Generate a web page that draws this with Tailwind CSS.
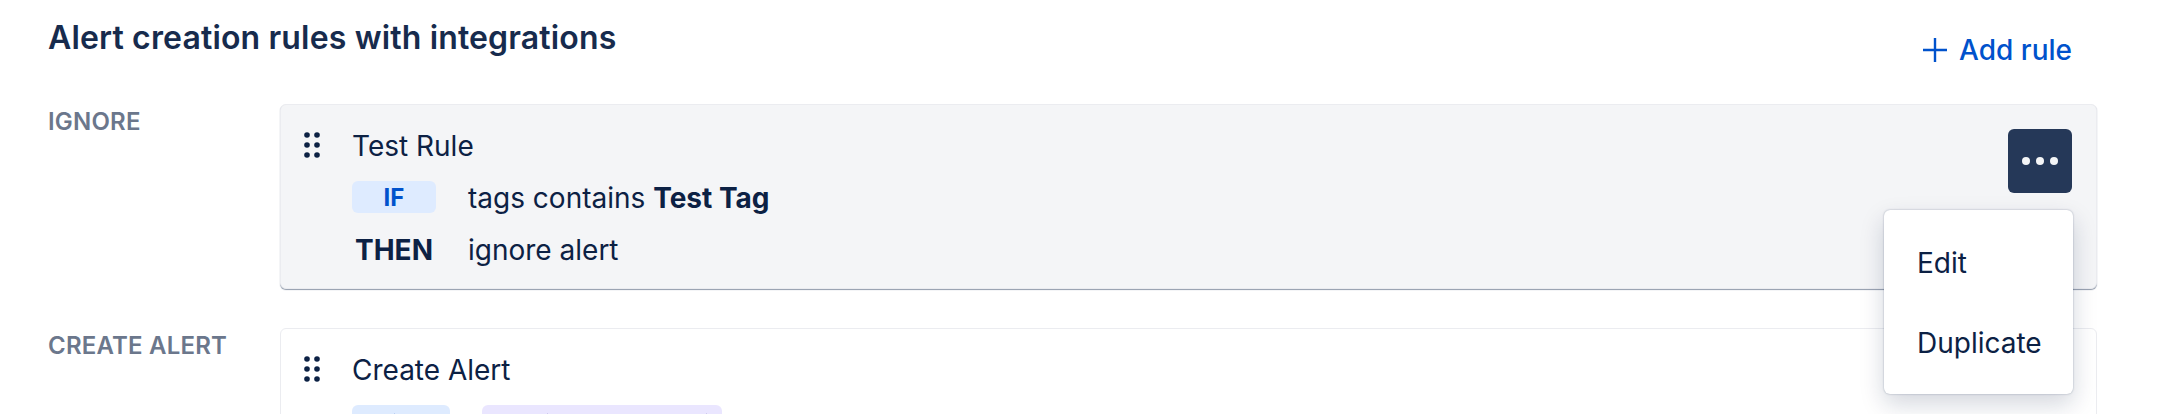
<!doctype html>
<html>
<head>
<meta charset="utf-8">
<script src="https://cdn.jsdelivr.net/npm/@tailwindcss/browser@4"></script>
</head>
<body class="bg-white">
<div class="relative h-[414px] w-[2160px] overflow-hidden bg-white font-['Inter',sans-serif] text-[#0c2144] px-[48px]">
  <div class="flex items-start justify-between pr-[40px] h-[104px]">
    <h2 class="pt-[18px] text-[32px] leading-[40px] font-semibold tracking-[0.15px] text-[#172b4d]">Alert creation rules with integrations</h2>
    <button class="mt-[30px] flex items-center gap-[12px] text-[#0052cc] text-[28px] leading-[40px] font-medium">
      <svg class="w-[24px] h-[24px]" viewBox="0 0 24 24" fill="none" stroke="#0052cc" stroke-width="2.4"><path d="M12 0v24M0 12h24"/></svg>
      Add rule
    </button>
  </div>
  <div class="flex flex-col gap-[39px]">
    <div class="flex">
      <div class="w-[232px] shrink-0 pt-[4px] text-[24px] leading-[28px] font-semibold tracking-[0.2px] text-[#6b778c]">IGNORE</div>
      <div class="w-[1817px] h-[185px] rounded-[6px] bg-[#f4f5f7] border border-[#ebecf0] shadow-[0_1px_1px_rgba(9,30,66,0.45)] flex pl-[23px] pr-[24px] pt-[17px]">
        <svg class="w-[16px] h-[26px] mt-[10px] mr-[32px] shrink-0" viewBox="0 0 16 26" fill="#0c2144"><circle cx="3" cy="3" r="2.8"/><circle cx="13" cy="3" r="2.8"/><circle cx="3" cy="13" r="2.8"/><circle cx="13" cy="13" r="2.8"/><circle cx="3" cy="23" r="2.8"/><circle cx="13" cy="23" r="2.8"/></svg>
        <div class="flex-1 flex flex-col text-[28px]">
          <div class="leading-[40px] mt-[4px]">Test Rule</div>
          <div class="flex items-center mt-[15px] h-[32px]">
            <span class="w-[84px] h-[32px] pt-[2px] rounded-[6px] bg-[#deebff] text-[#0052cc] text-[24px] font-bold flex items-center justify-center mr-[32px]">IF</span>
            <span class="mt-[2px]">tags contains <b class="font-bold">Test Tag</b></span>
          </div>
          <div class="flex items-center mt-[17px] h-[40px]">
            <span class="w-[84px] text-center font-bold mr-[32px]">THEN</span>
            <span>ignore alert</span>
          </div>
        </div>
        <button class="mt-[7px] w-[64px] h-[64px] rounded-[6px] bg-[#253858] flex items-center justify-center gap-[6px]">
          <span class="w-[8px] h-[8px] rounded-full bg-[#f4f5f7]"></span>
          <span class="w-[8px] h-[8px] rounded-full bg-[#f4f5f7]"></span>
          <span class="w-[8px] h-[8px] rounded-full bg-[#f4f5f7]"></span>
        </button>
      </div>
    </div>
    <div class="flex">
      <div class="w-[232px] shrink-0 pt-[4px] text-[24px] leading-[28px] font-semibold tracking-[0.2px] text-[#6b778c]">CREATE ALERT</div>
      <div class="w-[1817px] h-[185px] rounded-[6px] bg-white border border-[#ebecf0] flex pl-[23px] pr-[24px] pt-[17px]">
        <svg class="w-[16px] h-[26px] mt-[10px] mr-[32px] shrink-0" viewBox="0 0 16 26" fill="#0c2144"><circle cx="3" cy="3" r="2.8"/><circle cx="13" cy="3" r="2.8"/><circle cx="3" cy="13" r="2.8"/><circle cx="13" cy="13" r="2.8"/><circle cx="3" cy="23" r="2.8"/><circle cx="13" cy="23" r="2.8"/></svg>
        <div class="flex-1 flex flex-col text-[28px]">
          <div class="leading-[40px] mt-[4px]">Create Alert</div>
          <div class="flex items-start mt-[15px] gap-[32px]">
            <span class="relative w-[98px] h-[32px] rounded-[6px] bg-[#deebff]"><i class="absolute left-[42px] top-[8px] w-[1px] h-[1px] bg-[#bcd0f2]"></i></span>
            <span class="relative w-[240px] h-[32px] rounded-[6px] bg-[#eae6ff]"><i class="absolute left-[65px] top-[8px] w-[1px] h-[1px] bg-[#cfcaee]"></i><i class="absolute left-[224px] top-[8px] w-[1px] h-[1px] bg-[#cfcaee]"></i></span>
          </div>
        </div>
      </div>
    </div>
  </div>
  <div class="absolute left-[1884px] top-[210px] w-[189px] h-[184px] rounded-[6px] bg-white shadow-[0_10px_24px_rgba(9,30,66,0.18),0_0_2px_rgba(9,30,66,0.35)] pt-[13px] flex flex-col text-[28px]">
    <div class="h-[80px] pl-[33px] flex items-center">Edit</div>
    <div class="h-[80px] pl-[33px] flex items-center">Duplicate</div>
  </div>
</div>
</body>
</html>
